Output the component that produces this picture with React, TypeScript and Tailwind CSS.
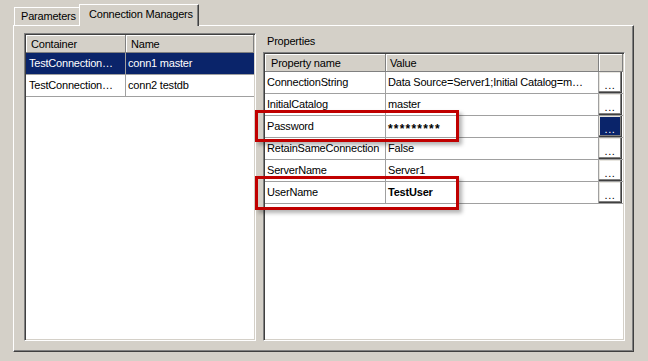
import React from 'react';

type Prop = { name: string; value: string; bold?: boolean; selected?: boolean };

const props: Prop[] = [
  { name: 'ConnectionString', value: 'Data Source=Server1;Initial Catalog=m…' },
  { name: 'InitialCatalog', value: 'master' },
  { name: 'Password', value: '*********', selected: true },
  { name: 'RetainSameConnection', value: 'False' },
  { name: 'ServerName', value: 'Server1' },
  { name: 'UserName', value: 'TestUser', bold: true },
];

const containers = [
  { container: 'TestConnection…', name: 'conn1 master', selected: true },
  { container: 'TestConnection…', name: 'conn2 testdb' },
];

const sunken =
  'bg-white border border-t-[#808080] border-l-[#808080] border-r-white border-b-white shadow-[inset_1px_1px_0_#404040,inset_-1px_-1px_0_#d4d0c8] p-px';

const headerCell =
  'h-full flex items-center pt-px border-r border-b border-[#808080] shadow-[inset_1px_1px_0_#ffffff]';

const EllipsisButton: React.FC<{ active?: boolean }> = ({ active }) => (
  <div
    className={`w-[23px] h-[21px] flex items-end justify-center pb-0 border-r border-b border-[#404040] shadow-[inset_-1px_-1px_0_#808080,inset_1px_1px_0_#e8e6e0] ${
      active ? 'bg-[#0a246a] text-white' : 'bg-white text-black'
    }`}
  >
    <span className="leading-[13px] tracking-[0.6px]">...</span>
  </div>
);

const App: React.FC = () => {
  return (
    <div className="relative w-[648px] h-[361px] overflow-hidden bg-[#d4d0c8] text-black text-[11px] tracking-[-0.2px] font-['Liberation_Sans',Arial,sans-serif]">
      {/* tabs */}
      <div className="flex items-end h-[25px] pl-[14px]">
        <div className="h-[18px] w-[66px] flex items-center pl-[6px] border-t border-l border-white">
          Parameters
        </div>
        <div className="relative z-10 -ml-px -mb-px h-[22px] w-[120px] flex items-center pl-[9px] pb-[2px] bg-[#d4d0c8] border-t border-l border-white border-r border-r-[#404040] shadow-[inset_-1px_0_0_#808080]">
          Connection Managers
        </div>
      </div>

      {/* tab page */}
      <div className="ml-[13px] w-[621px] h-[327px] flex gap-[7px] pl-[10px] pt-[7px] border-t border-l border-white border-r border-b border-r-[#404040] border-b-[#404040] shadow-[inset_-1px_-1px_0_#808080]">
        {/* container list */}
        <div className={`w-[232px] h-[308px] ${sunken}`}>
          <div className="flex h-[18px] bg-[#d4d0c8]">
            <div className={`${headerCell} w-[100px] pl-[5px]`}>Container</div>
            <div className={`${headerCell} flex-1 pl-[5px]`}>Name</div>
          </div>
          {containers.map((c, i) => (
            <div
              key={i}
              className={`flex h-[22px] border-b border-[#a0a0a0] ${c.selected ? 'bg-[#0a246a] text-white' : ''}`}
            >
              <div className="w-[100px] flex items-center pl-[3px] border-r border-[#a0a0a0] whitespace-nowrap overflow-hidden">
                {c.container}
              </div>
              <div className="flex-1 flex items-center pl-[2px] whitespace-nowrap">{c.name}</div>
            </div>
          ))}
        </div>

        {/* properties */}
        <div className="flex flex-col w-[362px]">
          <div className="h-[19px] flex items-center pl-[4px] pb-[2px]">Properties</div>
          <div className={`h-[289px] ${sunken}`}>
            <div className="flex h-[18px] bg-[#d4d0c8]">
              <div className={`${headerCell} w-[121px] pl-[6px]`}>Property name</div>
              <div className={`${headerCell} w-[213px] pl-[4px]`}>Value</div>
              <div className={`${headerCell} flex-1`} />
            </div>
            {props.map((p) => (
              <div key={p.name} className="flex h-[22px] border-b border-[#a0a0a0]">
                <div className="w-[121px] flex items-center pl-[2px] border-r border-[#a0a0a0] whitespace-nowrap overflow-hidden">
                  {p.name}
                </div>
                <div
                  className={`w-[213px] flex items-center pl-[2px] border-r border-[#a0a0a0] whitespace-nowrap overflow-hidden ${
                    p.bold ? 'font-bold' : ''
                  } ${p.selected ? 'font-bold text-[12px] tracking-[1.2px] pt-[4px]' : ''}`}
                >
                  {p.value}
                </div>
                <div className="flex-1 bg-white">
                  <EllipsisButton active={p.selected} />
                </div>
              </div>
            ))}
          </div>
        </div>
      </div>

      {/* highlight boxes */}
      <div className="absolute left-[255px] top-[110px] w-[204px] h-[32px] border-[3px] border-[#c00000] shadow-[3px_3px_4px_rgba(0,0,0,0.3)]" />
      <div className="absolute left-[255px] top-[176px] w-[204px] h-[34px] border-[3px] border-[#c00000] shadow-[3px_3px_4px_rgba(0,0,0,0.3)]" />
    </div>
  );
};

export default App;
